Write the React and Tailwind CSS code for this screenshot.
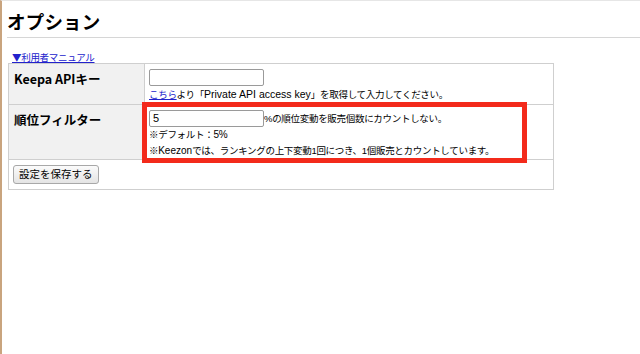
import React, { useState } from 'react';

const font = { fontFamily: '"Noto Sans CJK JP", "Liberation Sans", sans-serif' };
const mixed = { fontFamily: '"Liberation Sans", "Noto Sans CJK JP", sans-serif' };

function App() {
  const [apiKey, setApiKey] = useState('');
  const [rankFilter, setRankFilter] = useState('5');

  return (
    <div className="w-[640px] h-[354px] bg-white overflow-hidden border-l-2 border-[#c9a47e] border-t border-t-[#e6e6e6] text-black" style={font}>
      <div className="pl-[6px]">
        {/* Title */}
        <h1 className="text-[18.5px] font-bold leading-none pt-[11px] pb-[6px] border-b border-[#d6d6d6] tracking-[0.2px] -ml-[1px]">オプション</h1>

        <div className="pl-[4px] pt-[13px] text-[9.5px] leading-[12px] tracking-[-0.3px]">
          <a href="#" className="text-[#2222cc] underline">▼利用者マニュアル</a>
        </div>

        {/* Settings table */}
        <div className="relative w-[546px]">
          <table className="w-full border-collapse border border-[#cfcfcf] text-[9.5px] tracking-[-0.3px]" style={mixed}>
            <tbody>
              <tr className="h-[41px]">
                <th className="w-[136px] bg-[#f1f1f1] border border-[#cfcfcf] text-left align-top pl-[5px] pt-[7px] text-[12.5px] tracking-normal font-bold leading-[16px]" style={font}>Keepa APIキー</th>
                <td className="border border-[#cfcfcf] align-top pl-[4px] pt-[5px]">
                  <input
                    type="text"
                    value={apiKey}
                    onChange={e => setApiKey(e.target.value)}
                    className="block w-[115px] h-[17px] border border-[#9a9a9a] rounded-[2px] px-[3px] text-[11px] bg-white"
                  />
                  <div className="leading-[16px]">
                    <a href="#" className="text-[#2222cc] underline">こちら</a>より「<span className="text-[10.5px] tracking-normal">Private API access key</span>」を取得して入力してください。
                  </div>
                </td>
              </tr>
              <tr className="h-[55px]">
                <th className="bg-[#f1f1f1] border border-[#cfcfcf] text-left align-top pl-[5px] pt-[7px] text-[12.5px] tracking-normal font-bold leading-[16px]" style={font}>順位フィルター</th>
                <td className="border border-[#cfcfcf] align-top pl-[4px] pt-[5px]">
                  <div className="flex items-center">
                    <input
                      type="text"
                      value={rankFilter}
                      onChange={e => setRankFilter(e.target.value)}
                      className="block w-[115px] h-[17px] border border-[#9a9a9a] rounded-[2px] px-[3px] text-[11px] tracking-normal bg-white"
                    />
                    <span className="leading-[13px]">%の順位変動を販売個数にカウントしない。</span>
                  </div>
                  <div className="leading-[16px]">※デフォルト：<span className="text-[10px]">5%</span></div>
                  <div className="leading-[16px]">※<span className="text-[10px] tracking-normal">Keezon</span>では、ランキングの上下変動1回につき、1個販売とカウントしています。</div>
                </td>
              </tr>
              <tr className="h-[30px]">
                <td colSpan={2} className="border border-[#cfcfcf] pl-[4px]">
                  <button className="h-[19px] px-[5px] border border-[#a8a8a8] rounded-[3px] bg-gradient-to-b from-[#fbfbfb] to-[#e4e4e4] text-[10.5px] tracking-normal leading-none" style={font}>設定を保存する</button>
                </td>
              </tr>
            </tbody>
          </table>
          {/* Highlight annotation */}
          <div className="absolute left-[134px] top-[39px] w-[385px] h-[61px] border-[5px] border-[#f32a1b] pointer-events-none" />
        </div>
      </div>
    </div>
  );
}

export default App;
